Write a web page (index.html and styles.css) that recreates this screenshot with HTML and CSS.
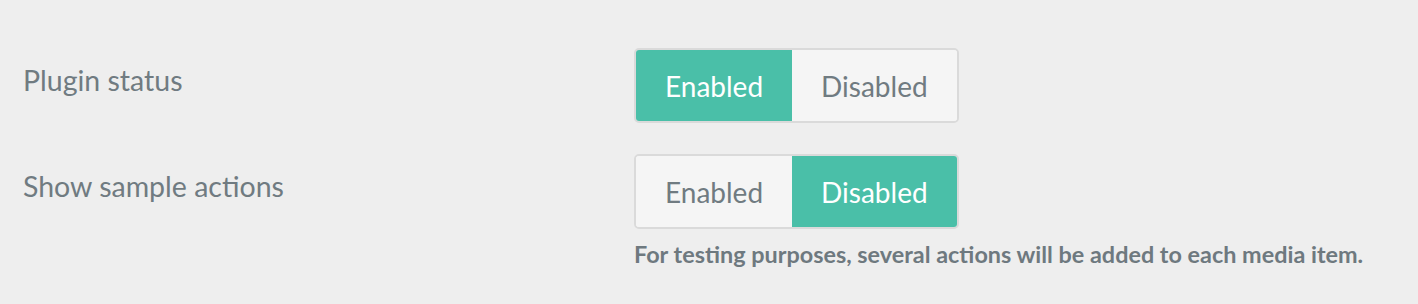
FILE: index.html
```html
<!DOCTYPE html>
<html lang="en">
<head>
    <meta charset="UTF-8">
    <meta name="viewport" content="width=device-width, initial-scale=1.0">
    <title>Plugin settings</title>
    <link rel="stylesheet" href="styles.css">
</head>
<body>
    <div class="settings">
        <!-- Plugin status -->
        <div class="row">
            <div class="label">Plugin status</div>
            <div class="control">
                <div class="toggle">
                    <button class="active">Enabled</button>
                    <button>Disabled</button>
                </div>
            </div>
        </div>

        <!-- Sample actions -->
        <div class="row">
            <div class="label">Show sample actions</div>
            <div class="control">
                <div class="toggle">
                    <button>Enabled</button>
                    <button class="active">Disabled</button>
                </div>
                <p class="help">For testing purposes, several actions will be added to each media item.</p>
            </div>
        </div>
    </div>
</body>
</html>
```

FILE: styles.css
```css
body {
    font-family: Lato, "Open Sans", sans-serif;
    margin: 0;
    padding: 0;
    background-color: #eeeeee;
    color: #707b81;
}

.settings {
    padding: 48px 0 0 23px;
}

.row {
    display: flex;
    margin-bottom: 31px;
}

.label {
    width: 611px;
    font-size: 28.5px;
    padding-top: 15px;
}

.toggle {
    display: inline-flex;
    border: 2px solid #dadada;
    border-radius: 5px;
    overflow: hidden;
    background-color: #f5f5f5;
}

.toggle button {
    height: 71px;
    padding: 0 29px;
    font-family: Lato, "Open Sans", sans-serif;
    font-size: 28px;
    color: #707b81;
    background-color: #f5f5f5;
    border: none;
    cursor: pointer;
}

.toggle button.active {
    color: white;
    background-color: #4abfa8;
}

.help {
    margin: 11px 0 0;
    font-size: 23.4px;
    font-weight: bold;
    color: #6e797f;
}
```
